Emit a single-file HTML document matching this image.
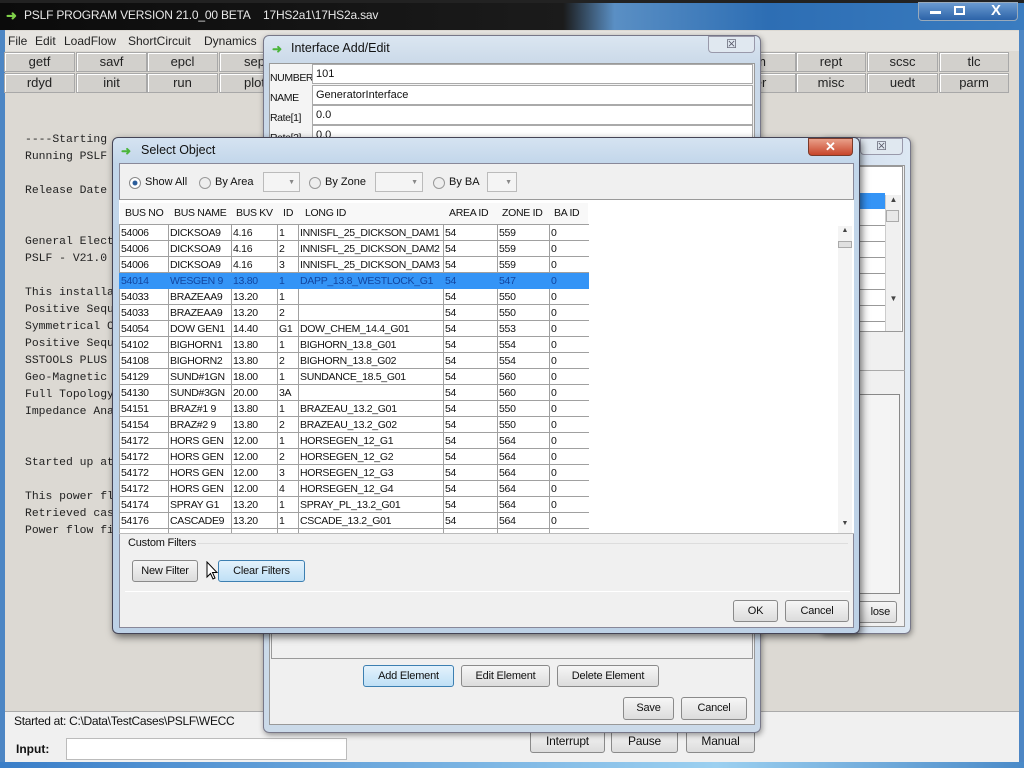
<!DOCTYPE html>
<html><head><meta charset="utf-8"><style>
*{margin:0;padding:0;box-sizing:border-box}
body{width:1024px;height:768px;overflow:hidden;position:relative;background:#dcd9d3;font-family:"Liberation Sans",sans-serif;font-size:12px;color:#111}
.a{position:absolute}
.btn{position:absolute;background:linear-gradient(#f6f6f6,#dcdcdc);border:1px solid #8a8a8a;border-radius:3px;text-align:center;font-size:11px;color:#111;letter-spacing:-0.2px}
.tb{position:absolute;height:20px;background:#d2d0cc;border:1px solid #a8a8a8;box-shadow:inset 1px 1px #fff;text-align:center;font-size:13px;line-height:18px;color:#222}
.mono{font-family:"Liberation Mono",monospace;font-size:11.4px;position:absolute;left:25px;color:#222}
table{border-collapse:collapse}
td{border:1px solid #a0a0a0;height:16px;padding:0 1px;font-size:10.5px;letter-spacing:-0.3px;white-space:nowrap;overflow:hidden;line-height:14px}
.sel td{background:#3494f6;color:#1346a0;border-color:#3494f6}
.m{position:absolute;top:34px;font-size:12px;color:#222}
</style></head><body>
<div class="a" style="left:0;top:0;width:1024px;height:30px;background:linear-gradient(90deg,#0b0b0b 0,#1b1b1b 55%,#5a8fc4 60%,#2d6eb4 75%,#3a7cc0 100%)"></div>
<div class="a" style="left:0;top:0;width:1024px;height:3px;background:#222"></div>
<div class="a" style="left:6px;top:8px;color:#7fd14a;font-size:13px;font-weight:bold">➜</div>
<div class="a" style="left:24px;top:8px;color:#e8e8e8;font-size:12px;letter-spacing:-0.2px">PSLF PROGRAM VERSION 21.0_00 BETA</div>
<div class="a" style="left:263px;top:8px;color:#e8e8e8;font-size:12px;letter-spacing:-0.2px">17HS2a1\17HS2a.sav</div>
<div class="a" style="left:918px;top:2px;width:100px;height:19px;border:1px solid #9ab;border-radius:0 0 4px 4px;background:linear-gradient(#6a9ad0,#2c63a8)"></div>
<div class="a" style="left:930px;top:11px;width:11px;height:3px;background:#fff"></div>
<div class="a" style="left:954px;top:6px;width:11px;height:9px;border:2px solid #fff"></div>
<div class="a" style="left:991px;top:2px;color:#fff;font-size:15px;font-weight:bold">X</div>
<div class="a" style="left:0;top:30px;width:5px;height:738px;background:#4d86c4"></div>
<div class="a" style="left:1019px;top:30px;width:5px;height:738px;background:#4d86c4"></div>
<div class="a" style="left:0;top:762px;width:1024px;height:6px;background:linear-gradient(90deg,#3a7ec8,#9cd0f0 70%,#4a8ac8)"></div>
<div class="a" style="left:5px;top:31px;width:1014px;height:20px;background:#e6e4e0"></div>
<div class="m" style="left:8px">File</div><div class="m" style="left:35px">Edit</div><div class="m" style="left:64px">LoadFlow</div><div class="m" style="left:128px">ShortCircuit</div><div class="m" style="left:204px">Dynamics</div>
<div class="tb" style="left:4px;top:52px;width:71px">getf</div><div class="tb" style="left:76px;top:52px;width:71px">savf</div><div class="tb" style="left:147px;top:52px;width:71px">epcl</div><div class="tb" style="left:219px;top:52px;width:71px">sep</div>
<div class="tb" style="left:725px;top:52px;width:71px">m</div><div class="tb" style="left:796px;top:52px;width:70px">rept</div><div class="tb" style="left:867px;top:52px;width:71px">scsc</div><div class="tb" style="left:939px;top:52px;width:70px">tlc</div>
<div class="tb" style="left:4px;top:73px;width:71px">rdyd</div><div class="tb" style="left:76px;top:73px;width:71px">init</div><div class="tb" style="left:147px;top:73px;width:71px">run</div><div class="tb" style="left:219px;top:73px;width:71px">plot</div>
<div class="tb" style="left:725px;top:73px;width:71px">er</div><div class="tb" style="left:796px;top:73px;width:70px">misc</div><div class="tb" style="left:867px;top:73px;width:71px">uedt</div><div class="tb" style="left:939px;top:73px;width:70px">parm</div>
<div class="mono" style="top:134px">----Starting</div>
<div class="mono" style="top:151px">Running PSLF</div>
<div class="mono" style="top:185px">Release Date</div>
<div class="mono" style="top:236px">General Elect</div>
<div class="mono" style="top:253px">PSLF - V21.0</div>
<div class="mono" style="top:287px">This installa</div>
<div class="mono" style="top:304px">Positive Sequ</div>
<div class="mono" style="top:321px">Symmetrical C</div>
<div class="mono" style="top:338px">Positive Sequ</div>
<div class="mono" style="top:355px">SSTOOLS PLUS</div>
<div class="mono" style="top:372px">Geo-Magnetic</div>
<div class="mono" style="top:389px">Full Topology</div>
<div class="mono" style="top:406px">Impedance Ana</div>
<div class="mono" style="top:457px">Started up at</div>
<div class="mono" style="top:491px">This power fl</div>
<div class="mono" style="top:508px">Retrieved cas</div>
<div class="mono" style="top:525px">Power flow fi</div>
<div class="a" style="left:5px;top:711px;width:1014px;height:51px;background:#f0f0f0;border-top:1px solid #aaa"></div>
<div class="a" style="left:14px;top:714px;font-size:12px;letter-spacing:-0.3px">Started at: C:\Data\TestCases\PSLF\WECC</div>
<div class="a" style="left:16px;top:742px;font-size:12px;font-weight:bold">Input:</div>
<div class="a" style="left:66px;top:738px;width:281px;height:22px;background:#fff;border:1px solid #bbb"></div>
<div class="btn" style="left:530px;top:730px;width:75px;height:23px;line-height:21px;font-size:12px">Interrupt</div>
<div class="btn" style="left:611px;top:730px;width:67px;height:23px;line-height:21px;font-size:12px">Pause</div>
<div class="btn" style="left:686px;top:730px;width:69px;height:23px;line-height:21px;font-size:12px">Manual</div>

<div class="a" style="left:263px;top:35px;width:498px;height:698px;border:1px solid #778;border-radius:6px;background:linear-gradient(#dbe6f1,#c9d8e8 30px,#cbdae9);box-shadow:1px 2px 6px rgba(0,0,0,.4)"></div>
<div class="a" style="left:272px;top:42px;color:#4bb53a;font-size:12px;font-weight:bold">➜</div>
<div class="a" style="left:291px;top:41px;font-size:12.5px">Interface Add/Edit</div>
<div class="a" style="left:708px;top:36px;width:47px;height:17px;border:1px solid #99a;border-radius:0 0 4px 4px;background:#e0e8f0;text-align:center;color:#556;font-size:12px;line-height:15px">☒</div>
<div class="a" style="left:269px;top:63px;width:486px;height:662px;background:#f0f0f0;border:1px solid #999"></div>
<div class="a" style="left:270px;top:64px;width:483px;height:80px;background:#f4f4f4"></div>
<div class="a" style="left:270px;top:68px;font-size:10.5px;line-height:20px;letter-spacing:-0.4px">NUMBER<br>NAME<br>Rate[1]<br>Rate[2]</div>
<div class="a" style="left:312px;top:64px;width:441px;height:20px;background:#fff;border:1px solid #aaa;padding-left:3px;line-height:18px;font-size:11px">101</div>
<div class="a" style="left:312px;top:85px;width:441px;height:20px;background:#fff;border:1px solid #aaa;padding-left:3px;line-height:18px;font-size:11px">GeneratorInterface</div>
<div class="a" style="left:312px;top:105px;width:441px;height:20px;background:#fff;border:1px solid #aaa;padding-left:3px;line-height:18px;font-size:11px">0.0</div>
<div class="a" style="left:312px;top:125px;width:441px;height:20px;background:#fff;border:1px solid #aaa;padding-left:3px;line-height:18px;font-size:11px">0.0</div>
<div class="a" style="left:271px;top:630px;width:482px;height:29px;border:1px solid #999;border-top:none"></div>
<div class="btn" style="left:363px;top:665px;width:91px;height:22px;line-height:20px;background:linear-gradient(#e4f2fc,#bfe0f6);border-color:#3c7fb1">Add Element</div>
<div class="btn" style="left:461px;top:665px;width:89px;height:22px;line-height:20px">Edit Element</div>
<div class="btn" style="left:557px;top:665px;width:102px;height:22px;line-height:20px">Delete Element</div>
<div class="btn" style="left:623px;top:697px;width:51px;height:23px;line-height:21px">Save</div>
<div class="btn" style="left:681px;top:697px;width:66px;height:23px;line-height:21px">Cancel</div>

<div class="a" style="left:820px;top:137px;width:91px;height:497px;border:1px solid #778;border-radius:6px;background:linear-gradient(90deg,#cfdced,#dde8f3);box-shadow:1px 2px 6px rgba(0,0,0,.4)"></div>
<div class="a" style="left:860px;top:138px;width:43px;height:17px;border:1px solid #99a;border-radius:0 0 4px 4px;background:#e0e8f0;text-align:center;color:#556;font-size:12px;line-height:15px">☒</div>
<div class="a" style="left:850px;top:165px;width:55px;height:462px;background:#f0f0f0;border:1px solid #999"></div>
<div class="a" style="left:850px;top:166px;width:53px;height:166px;background:#fff;border:1px solid #999"></div>
<div class="a" style="left:850px;top:193px;width:35px;height:16px;background:#3494f6"></div>
<div class="a" style="left:850px;top:225px;width:35px;height:1px;background:#999;box-shadow:0 16px #999,0 32px #999,0 48px #999,0 64px #999,0 80px #999,0 96px #999"></div>
<div class="a" style="left:885px;top:195px;width:16px;height:136px;background:#f0f0f0;border-left:1px solid #ccc;font-size:8px;text-align:center;color:#444">▲<br><br><br><br><br><br><br><br><br><br><br>▼</div>
<div class="a" style="left:886px;top:210px;width:13px;height:12px;border:1px solid #aaa;background:#e8e8e8"></div>
<div class="a" style="left:850px;top:370px;width:55px;height:1px;background:#aaa"></div>
<div class="a" style="left:850px;top:394px;width:50px;height:200px;background:#f4f4f4;border:1px solid #888"></div>
<div class="btn" style="left:850px;top:601px;width:47px;height:22px;line-height:20px;text-align:right;padding-right:6px">lose</div>

<div class="a" style="left:112px;top:137px;width:748px;height:497px;border:1px solid #445;border-radius:6px;background:linear-gradient(#d5e3f1,#c2d6ea 26px,#bdd1e6);box-shadow:2px 3px 8px rgba(0,0,0,.55)"></div>
<div class="a" style="left:121px;top:144px;color:#4bb53a;font-size:12px;font-weight:bold">➜</div>
<div class="a" style="left:141px;top:143px;font-size:12.5px">Select Object</div>
<div class="a" style="left:808px;top:138px;width:45px;height:18px;border:1px solid #7a3a2a;border-radius:0 0 4px 4px;background:linear-gradient(#e9a08a,#c8452a);text-align:center;color:#fff;font-size:13px;font-weight:bold;line-height:16px">✕</div>
<div class="a" style="left:119px;top:163px;width:735px;height:465px;background:#f0f0f0;border:1px solid #889"></div>
<div class="a" style="left:129px;top:177px;width:12px;height:12px;border-radius:50%;border:1px solid #888;background:radial-gradient(#2a5c9a 30%,#fff 40%)"></div>
<div class="a" style="left:145px;top:176px;font-size:11px">Show All</div>
<div class="a" style="left:199px;top:177px;width:12px;height:12px;border-radius:50%;border:1px solid #999;background:#eee"></div>
<div class="a" style="left:215px;top:176px;font-size:11px">By Area</div>
<div class="a" style="left:263px;top:172px;width:37px;height:20px;border:1px solid #bbb;background:#f4f4f4;font-size:7px;color:#888;text-align:right;padding:6px 4px 0 0">▼</div>
<div class="a" style="left:309px;top:177px;width:12px;height:12px;border-radius:50%;border:1px solid #999;background:#eee"></div>
<div class="a" style="left:325px;top:176px;font-size:11px">By Zone</div>
<div class="a" style="left:375px;top:172px;width:48px;height:20px;border:1px solid #bbb;background:#f4f4f4;font-size:7px;color:#888;text-align:right;padding:6px 4px 0 0">▼</div>
<div class="a" style="left:433px;top:177px;width:12px;height:12px;border-radius:50%;border:1px solid #999;background:#eee"></div>
<div class="a" style="left:449px;top:176px;font-size:11px">By BA</div>
<div class="a" style="left:487px;top:172px;width:30px;height:20px;border:1px solid #bbb;background:#f4f4f4;font-size:7px;color:#888;text-align:right;padding:6px 4px 0 0">▼</div>
<div class="a" style="left:119px;top:199px;width:735px;height:335px;background:#fff;border-top:1px solid #999"></div>
<div class="a" style="left:120px;top:203px;width:468px;height:21px;background:#f8f8f8"></div>
<div class="a" style="left:125px;top:207px;font-size:10.5px;letter-spacing:-0.3px">BUS NO</div>
<div class="a" style="left:174px;top:207px;font-size:10.5px;letter-spacing:-0.3px">BUS NAME</div>
<div class="a" style="left:236px;top:207px;font-size:10.5px;letter-spacing:-0.3px">BUS KV</div>
<div class="a" style="left:283px;top:207px;font-size:10.5px">ID</div>
<div class="a" style="left:305px;top:207px;font-size:10.5px;letter-spacing:-0.3px">LONG ID</div>
<div class="a" style="left:449px;top:207px;font-size:10.5px;letter-spacing:-0.3px">AREA ID</div>
<div class="a" style="left:502px;top:207px;font-size:10.5px;letter-spacing:-0.3px">ZONE ID</div>
<div class="a" style="left:554px;top:207px;font-size:10.5px;letter-spacing:-0.3px">BA ID</div>
<div class="a" style="left:119px;top:224px;width:470px;height:309px;overflow:hidden">
<table style="width:470px;table-layout:fixed">
<colgroup><col style="width:49px"><col style="width:63px"><col style="width:46px"><col style="width:21px"><col style="width:145px"><col style="width:54px"><col style="width:52px"><col style="width:40px"></colgroup>
<tr><td>54006</td><td>DICKSOA9</td><td>4.16</td><td>1</td><td>INNISFL_25_DICKSON_DAM1</td><td>54</td><td>559</td><td>0</td></tr>
<tr><td>54006</td><td>DICKSOA9</td><td>4.16</td><td>2</td><td>INNISFL_25_DICKSON_DAM2</td><td>54</td><td>559</td><td>0</td></tr>
<tr><td>54006</td><td>DICKSOA9</td><td>4.16</td><td>3</td><td>INNISFL_25_DICKSON_DAM3</td><td>54</td><td>559</td><td>0</td></tr>
<tr class="sel"><td>54014</td><td>WESGEN 9</td><td>13.80</td><td>1</td><td>DAPP_13.8_WESTLOCK_G1</td><td>54</td><td>547</td><td>0</td></tr>
<tr><td>54033</td><td>BRAZEAA9</td><td>13.20</td><td>1</td><td></td><td>54</td><td>550</td><td>0</td></tr>
<tr><td>54033</td><td>BRAZEAA9</td><td>13.20</td><td>2</td><td></td><td>54</td><td>550</td><td>0</td></tr>
<tr><td>54054</td><td>DOW GEN1</td><td>14.40</td><td>G1</td><td>DOW_CHEM_14.4_G01</td><td>54</td><td>553</td><td>0</td></tr>
<tr><td>54102</td><td>BIGHORN1</td><td>13.80</td><td>1</td><td>BIGHORN_13.8_G01</td><td>54</td><td>554</td><td>0</td></tr>
<tr><td>54108</td><td>BIGHORN2</td><td>13.80</td><td>2</td><td>BIGHORN_13.8_G02</td><td>54</td><td>554</td><td>0</td></tr>
<tr><td>54129</td><td>SUND#1GN</td><td>18.00</td><td>1</td><td>SUNDANCE_18.5_G01</td><td>54</td><td>560</td><td>0</td></tr>
<tr><td>54130</td><td>SUND#3GN</td><td>20.00</td><td>3A</td><td></td><td>54</td><td>560</td><td>0</td></tr>
<tr><td>54151</td><td>BRAZ#1 9</td><td>13.80</td><td>1</td><td>BRAZEAU_13.2_G01</td><td>54</td><td>550</td><td>0</td></tr>
<tr><td>54154</td><td>BRAZ#2 9</td><td>13.80</td><td>2</td><td>BRAZEAU_13.2_G02</td><td>54</td><td>550</td><td>0</td></tr>
<tr><td>54172</td><td>HORS GEN</td><td>12.00</td><td>1</td><td>HORSEGEN_12_G1</td><td>54</td><td>564</td><td>0</td></tr>
<tr><td>54172</td><td>HORS GEN</td><td>12.00</td><td>2</td><td>HORSEGEN_12_G2</td><td>54</td><td>564</td><td>0</td></tr>
<tr><td>54172</td><td>HORS GEN</td><td>12.00</td><td>3</td><td>HORSEGEN_12_G3</td><td>54</td><td>564</td><td>0</td></tr>
<tr><td>54172</td><td>HORS GEN</td><td>12.00</td><td>4</td><td>HORSEGEN_12_G4</td><td>54</td><td>564</td><td>0</td></tr>
<tr><td>54174</td><td>SPRAY G1</td><td>13.20</td><td>1</td><td>SPRAY_PL_13.2_G01</td><td>54</td><td>564</td><td>0</td></tr>
<tr><td>54176</td><td>CASCADE9</td><td>13.20</td><td>1</td><td>CSCADE_13.2_G01</td><td>54</td><td>564</td><td>0</td></tr>
<tr><td>54176</td><td>CASCADE9</td><td>13.20</td><td>2</td><td>CSCADE_13.2_G02</td><td>54</td><td>564</td><td>0</td></tr>
</table></div>
<div class="a" style="left:838px;top:226px;width:14px;height:307px;background:#f4f4f4;font-size:7px;color:#444;text-align:center;line-height:10px">▲</div>
<div class="a" style="left:838px;top:241px;width:14px;height:7px;border:1px solid #aaa;background:#e0e0e0"></div>
<div class="a" style="left:838px;top:520px;font-size:7px;color:#444;width:14px;text-align:center">▼</div>
<div class="a" style="left:119px;top:533px;width:735px;height:1px;background:#bbb"></div>
<div class="a" style="left:128px;top:537px;font-size:11px;letter-spacing:-0.2px">Custom Filters</div>
<div class="a" style="left:198px;top:543px;width:650px;height:1px;background:#ddd"></div>
<div class="a" style="left:125px;top:591px;width:725px;height:1px;background:#fff"></div>
<div class="btn" style="left:132px;top:560px;width:66px;height:22px;line-height:20px">New Filter</div>
<div class="btn" style="left:218px;top:560px;width:87px;height:22px;line-height:20px;background:linear-gradient(#e4f2fc,#bfe0f6);border-color:#3c7fb1">Clear Filters</div>
<svg class="a" style="left:206px;top:561px" width="12" height="20" viewBox="0 0 12 20"><path d="M1 1 L1 16 L4.5 12.5 L7 18 L9 17 L6.5 11.5 L11 11.5 Z" fill="#fff" stroke="#000" stroke-width="1"/></svg>
<div class="btn" style="left:733px;top:600px;width:45px;height:22px;line-height:20px">OK</div>
<div class="btn" style="left:785px;top:600px;width:64px;height:22px;line-height:20px">Cancel</div>
</body></html>
